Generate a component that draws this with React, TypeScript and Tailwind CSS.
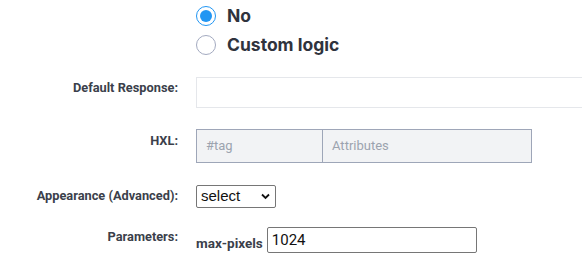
import React from "react";

const labelCls =
  "w-[178px] shrink-0 text-right text-[12.8px] font-bold text-[#3b3f4b] leading-[15px]";

export default function App() {
  return (
    <div className="w-[582px] h-[275px] bg-white overflow-hidden font-['Roboto',sans-serif]">
      <div className="flex flex-col pl-[196px] pt-[6px] gap-[9px]">
        <label className="flex items-center gap-[11px] h-[20px]">
          <span className="w-[20px] h-[20px] rounded-full border-[1.5px] border-[#2196f3] flex items-center justify-center">
            <span className="w-[12px] h-[12px] rounded-full bg-[#2196f3]" />
          </span>
          <span className="text-[17.5px] font-bold text-[#2f333d] leading-[20px] font-['Inter',sans-serif]">No</span>
        </label>
        <label className="flex items-center gap-[11px] h-[20px]">
          <span className="w-[20px] h-[20px] rounded-full border border-[#a3aac0]" />
          <span className="text-[17.5px] font-bold text-[#2f333d] leading-[20px] font-['Inter',sans-serif]">Custom logic</span>
        </label>
      </div>

      <div className="flex items-start gap-[18px] mt-[22px]">
        <div className={labelCls + " pt-[3px]"}>Default Response:</div>
        <div className="flex-1 h-[31px] border border-[#e5e7eb] border-r-0 bg-white" />
      </div>

      <div className="flex items-start gap-[18px] mt-[21px]">
        <div className={labelCls + " pt-[4px]"}>HXL:</div>
        <div className="flex w-[336px] h-[34px] border border-[#9ea6b8] bg-[#f2f3f5]">
          <div className="w-[126px] border-r border-[#9ea6b8] flex items-center pl-[9px] text-[13px] text-[#9ca3af]">
            #tag
          </div>
          <div className="flex-1 flex items-center pl-[9px] text-[13px] text-[#9ca3af]">
            Attributes
          </div>
        </div>
      </div>

      <div className="flex items-start gap-[18px] mt-[22px]">
        <div className={labelCls + " pt-[3px]"}>Appearance (Advanced):</div>
        <div className="relative w-[80px] h-[23px] border border-[#767676] rounded-[2px] bg-white flex items-center pl-[4px]">
          <span className="text-[15px] text-[#111] font-['Liberation_Sans',sans-serif]">select</span>
          <svg
            className="absolute right-[5px] top-[7px]"
            width="9"
            height="7"
            viewBox="0 0 9 7"
          >
            <path d="M1 1.5 L4.5 5 L8 1.5" stroke="#111" strokeWidth="1.8" fill="none" />
          </svg>
        </div>
      </div>

      <div className="flex items-start gap-[18px] mt-[19px]">
        <div className={labelCls + " pt-[2px]"}>Parameters:</div>
        <div className="flex items-center gap-[4px]">
          <span className="text-[13.5px] font-bold text-[#3b3f4b] pt-[6px]">max-pixels</span>
          <div className="w-[210px] h-[26px] border border-[#767676] rounded-[2px] flex items-center pl-[4px] text-[15px] text-[#111]">
            1024
          </div>
        </div>
      </div>
    </div>
  );
}
